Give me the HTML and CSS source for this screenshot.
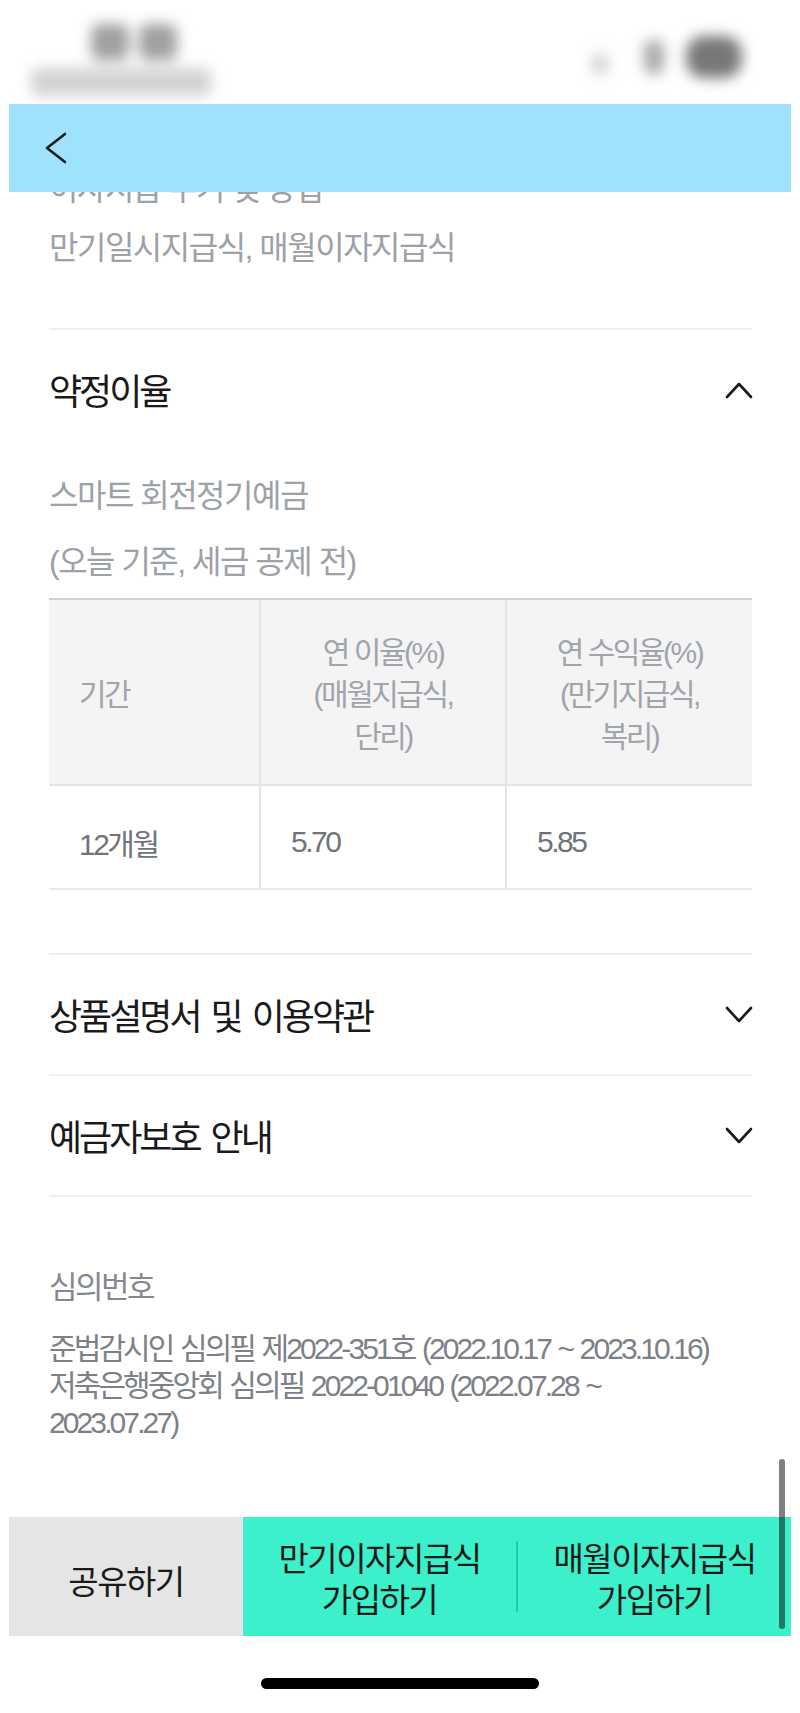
FILE: index.html
```html
<!DOCTYPE html>
<html lang="ko">
<head>
    <meta charset="UTF-8">
    <meta name="viewport" content="width=device-width, initial-scale=1.0">
    <title>스마트 회전정기예금</title>
    <link rel="stylesheet" href="styles.css">
</head>
<body>
    <div class="screen">
        <div class="status">
            <div class="status-left">
                <div class="blob-row">
                    <span class="blob blob-dark"></span>
                    <span class="blob blob-dark"></span>
                </div>
                <span class="blob blob-wide"></span>
            </div>
            <div class="status-right">
                <span class="blob blob-dot"></span>
                <span class="blob blob-mid"></span>
                <span class="blob blob-big"></span>
            </div>
        </div>

        <div class="appbar">
            <svg class="back" width="24" height="32" viewBox="0 0 24 32">
                <path d="M21 2 L3 16 L21 30" fill="none" stroke="#1a1a1a" stroke-width="2.6" stroke-linecap="round" stroke-linejoin="round"/>
            </svg>
        </div>

        <div class="content">
            <div class="info">
                <p class="sub">이자지급 주기 및 방법</p>
                <p class="sub">만기일시지급식, 매월이자지급식</p>
            </div>

            <div class="acc">
                <div class="acc-head">
                    <span>약정이율</span>
                    <svg width="28" height="18" viewBox="0 0 28 18">
                        <path d="M2 16 L14 3 L26 16" fill="none" stroke="#1a1a1a" stroke-width="2.6" stroke-linecap="round" stroke-linejoin="round"/>
                    </svg>
                </div>
                <div class="acc-body">
                    <p class="sub">스마트 회전정기예금</p>
                    <p class="sub sub-second">(오늘 기준, 세금 공제 전)</p>
                    <div class="rate-table">
                        <div class="cell head head-left">기간</div>
                        <div class="cell head">연 이율(%)<br>(매월지급식,<br>단리)</div>
                        <div class="cell head">연 수익율(%)<br>(만기지급식,<br>복리)</div>
                        <div class="cell row">12개월</div>
                        <div class="cell row">5.70</div>
                        <div class="cell row">5.85</div>
                    </div>
                </div>
            </div>

            <div class="acc">
                <div class="acc-head">
                    <span>상품설명서 및 이용약관</span>
                    <svg width="28" height="18" viewBox="0 0 28 18">
                        <path d="M2 2 L14 15 L26 2" fill="none" stroke="#1a1a1a" stroke-width="2.6" stroke-linecap="round" stroke-linejoin="round"/>
                    </svg>
                </div>
            </div>

            <div class="acc acc-last">
                <div class="acc-head">
                    <span>예금자보호 안내</span>
                    <svg width="28" height="18" viewBox="0 0 28 18">
                        <path d="M2 2 L14 15 L26 2" fill="none" stroke="#1a1a1a" stroke-width="2.6" stroke-linecap="round" stroke-linejoin="round"/>
                    </svg>
                </div>
            </div>

            <div class="review">
                <p class="review-title">심의번호</p>
                <p class="review-text">준법감시인 심의필 제2022-351호 (2022.10.17 ~ 2023.10.16)<br>저축은행중앙회 심의필 2022-01040 (2022.07.28 ~<br>2023.07.27)</p>
            </div>
        </div>

        <div class="bottom-bar">
            <div class="share">공유하기</div>
            <div class="join">
                <div class="join-btn">만기이자지급식<br>가입하기</div>
                <div class="join-sep"></div>
                <div class="join-btn">매월이자지급식<br>가입하기</div>
            </div>
        </div>

        <div class="scroll-thumb"></div>
        <div class="home-bar"></div>
    </div>
</body>
</html>
```

FILE: styles.css
```css
body {
    margin: 0;
    background-color: white;
    font-family: "Liberation Sans", "Noto Sans CJK KR", sans-serif;
    color: #1a1a1a;
}
p {
    margin: 0;
}
.screen {
    position: relative;
    width: 800px;
    height: 1713px;
    overflow: hidden;
    background-color: white;
}

/* status bar, blurred in the screenshot */
.status {
    height: 104px;
    display: flex;
    justify-content: space-between;
    padding: 0 58px 0 31px;
    box-sizing: border-box;
    filter: blur(7px);
}
.status-left {
    display: flex;
    flex-direction: column;
    align-items: center;
    padding-top: 24px;
    gap: 8px;
}
.blob-row {
    display: flex;
    gap: 10px;
    margin-left: 26px;
}
.blob {
    display: block;
    background-color: #aaa;
    border-radius: 8px;
}
.blob-dark {
    width: 38px;
    height: 36px;
    background-color: #a0a0a0;
}
.blob-wide {
    width: 180px;
    height: 28px;
    background-color: #d2d2d2;
}
.status-right {
    display: flex;
    align-items: center;
    gap: 36px;
    padding-top: 10px;
}
.blob-dot {
    width: 16px;
    height: 22px;
    background-color: #d0d0d0;
    margin-top: 14px;
}
.blob-mid {
    width: 20px;
    height: 34px;
    background-color: #a8a8a8;
}
.blob-big {
    width: 56px;
    height: 42px;
    border-radius: 18px;
    background-color: #777;
    margin-left: -14px;
}

.appbar {
    position: absolute;
    top: 104px;
    left: 9px;
    right: 9px;
    height: 88px;
    background-color: #9fe2fd;
    display: flex;
    align-items: center;
    padding-left: 35px;
    z-index: 2;
}

.content {
    padding: 60px 48px 0 49px;
}
.sub {
    color: #9da1a8;
    font-size: 32px;
    line-height: 50px;
    letter-spacing: -1.5px;
}
.info .sub + .sub {
    margin-top: 9px;
}
.info {
    padding-bottom: 55px;
}

.acc {
    border-top: 2px solid #efefef;
}
.acc-last {
    border-bottom: 2px solid #efefef;
}
.acc-head {
    height: 119px;
    box-sizing: border-box;
    padding-top: 6px;
    display: flex;
    align-items: center;
    justify-content: space-between;
    font-size: 36px;
    line-height: 50px;
    letter-spacing: -3px;
    word-spacing: 4px;
    color: #1a1a1a;
}
.acc-head svg {
    margin-right: -1px;
    margin-top: -6px;
}
.acc-body {
    padding-top: 22px;
    padding-bottom: 63px;
}
.sub-second {
    margin-top: 16px;
}

.rate-table {
    margin-top: 11px;
    display: grid;
    grid-template-columns: 210px 246px 1fr;
    border-top: 2px solid #cfd0d2;
    border-bottom: 2px solid #e9e9e9;
    font-size: 30px;
    letter-spacing: -2.5px;
}
.cell {
    display: flex;
    align-items: center;
    border-left: 2px solid #e4e4e4;
    box-sizing: border-box;
}
.cell:nth-child(3n+1) {
    border-left: none;
}
.head {
    height: 186px;
    padding-top: 5px;
    background-color: #f4f4f4;
    justify-content: center;
    text-align: center;
    line-height: 42px;
    color: #a0a4ab;
    border-bottom: 2px solid #e4e4e4;
}
.head-left {
    justify-content: flex-start;
    padding-left: 30px;
}
.row {
    height: 102px;
    padding-left: 30px;
    padding-top: 9px;
    color: #70747a;
}

.review {
    padding-top: 66px;
}
.review-title {
    color: #85898f;
    font-size: 31px;
    line-height: 50px;
    letter-spacing: -2.5px;
}
.review-text {
    margin-top: 17px;
    color: #7d8187;
    font-size: 30px;
    line-height: 37px;
    letter-spacing: -2.9px;
    word-spacing: 2px;
}

.bottom-bar {
    position: absolute;
    left: 9px;
    right: 9px;
    bottom: 77px;
    height: 119px;
    display: flex;
    font-size: 33px;
    letter-spacing: -1.5px;
    color: #1a1a1a;
    z-index: 2;
}
.share {
    width: 234px;
    box-sizing: border-box;
    padding-top: 6px;
    background-color: #e5e5e5;
    display: flex;
    align-items: center;
    justify-content: center;
}
.join {
    flex: 1;
    background-color: #3cf0cb;
    display: flex;
    align-items: center;
}
.join-btn {
    flex: 1;
    text-align: center;
    line-height: 41px;
    padding-top: 6px;
}
.join-sep {
    width: 2px;
    height: 71px;
    background-color: #22c8a8;
}

.scroll-thumb {
    position: absolute;
    left: 779px;
    top: 1459px;
    width: 6px;
    height: 170px;
    border-radius: 3px;
    background-color: rgba(0, 0, 0, 0.5);
    z-index: 3;
}
.home-bar {
    position: absolute;
    left: 261px;
    top: 1678px;
    width: 278px;
    height: 11px;
    border-radius: 6px;
    background-color: black;
}
```
